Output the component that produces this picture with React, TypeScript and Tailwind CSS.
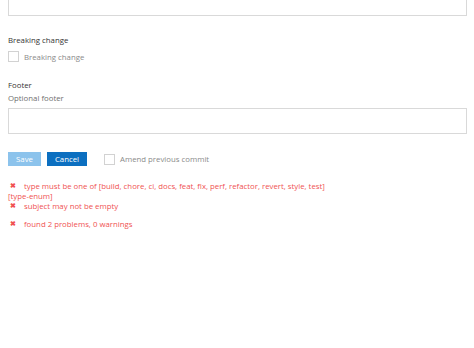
import React from 'react';

const font = { fontFamily: '"Open Sans", "Noto Sans", sans-serif' };

const Box = () => (
    <span className="inline-block w-[11px] h-[11px] border border-[#d2d2d2] bg-white shrink-0"></span>
);

const App: React.FC = () => {
    const errors = [
        'type must be one of [build, chore, ci, docs, feat, fix, perf, refactor, revert, style, test]',
    ];

    return (
        <div className="w-[474px] h-[348px] overflow-hidden bg-white pl-2 text-[7.8px]" style={font}>
            {/* Subject textarea (scrolled above) */}
            <div className="mt-[-14px] h-[30px] w-[459px] border border-[#d9d9d9]"></div>

            {/* Breaking change */}
            <div className="mt-[18px] leading-[12px] font-medium text-[#333]">Breaking change</div>
            <div className="mt-[5px] flex items-center gap-[5px] h-[11px]">
                <Box />
                <span className="text-[#8a8a8a] leading-[12px]">Breaking change</span>
            </div>

            {/* Footer */}
            <div className="mt-[17px] leading-[12px] text-[#333]">Footer</div>
            <div className="mt-[1px] leading-[12px] text-[#6f6f6f]">Optional footer</div>
            <div className="mt-[4px] h-[26px] w-[459px] border border-[#d9d9d9]"></div>

            {/* Actions */}
            <div className="mt-[18px] flex items-center h-[14px]">
                <button className="h-[14px] w-[33px] bg-[#8cc3ec] text-white leading-[14px]">Save</button>
                <button className="ml-[6px] h-[14px] w-[40px] bg-[#0c6fc0] text-white leading-[14px]">Cancel</button>
                <span className="ml-[17px] flex"><Box /></span>
                <span className="ml-[5px] text-[#8a8a8a] leading-[12px]">Amend previous commit</span>
            </div>

            {/* Lint output */}
            <div className="mt-[15px] text-[#f05252] leading-[10px]">
                {errors.map((e) => (
                    <div key={e} className="flex">
                        <span className="w-[16px] pl-[2px] text-[7px] font-bold">✖</span>
                        <span>{e}</span>
                    </div>
                ))}
                <div>[type-enum]</div>
                <div className="flex">
                    <span className="w-[16px] pl-[2px] text-[7px] font-bold">✖</span>
                    <span>subject may not be empty</span>
                </div>
                <div className="flex mt-[8px]">
                    <span className="w-[16px] pl-[2px] text-[7px] font-bold">✖</span>
                    <span>found 2 problems, 0 warnings</span>
                </div>
            </div>
        </div>
    );
};

export default App;
